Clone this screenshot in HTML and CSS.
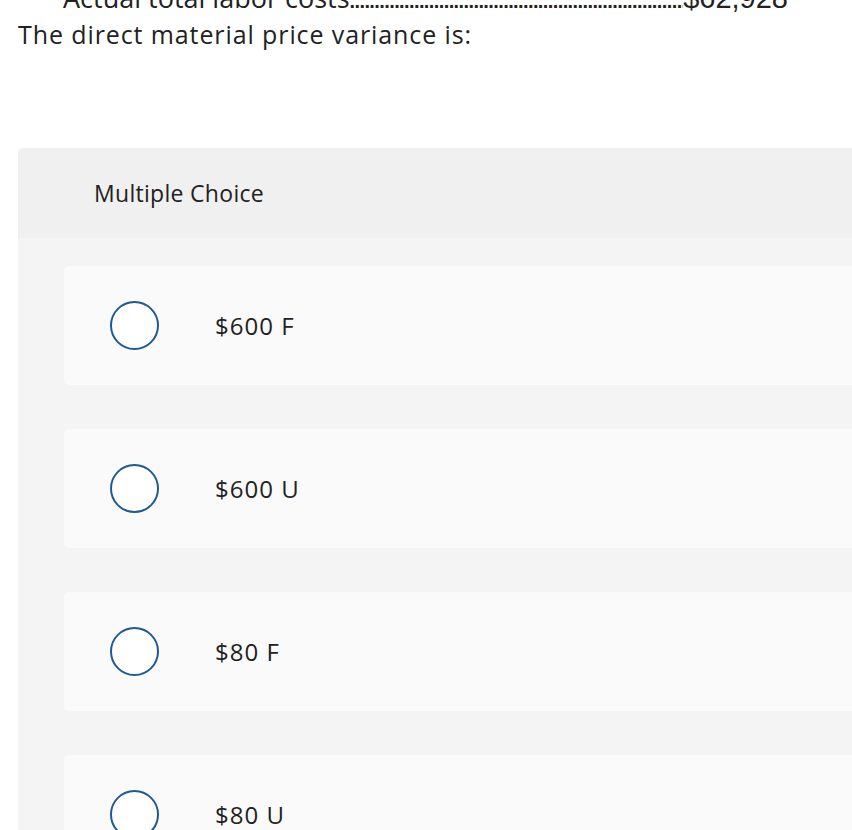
FILE: index.html
```html
<!DOCTYPE html>
<html>
<head>
<meta charset="utf-8">
<link rel="stylesheet" href="styles.css">
</head>
<body>
<div class="prev-line">
  <span class="prev-label">Actual total labor costs</span>
  <span class="leader">........................................................................................................................................</span>
  <span class="prev-value">$62,928</span>
</div>
<p class="question">The direct material price variance is:</p>
<section class="panel">
  <div class="panel-header">Multiple Choice</div>
  <div class="panel-body">
    <div class="choice"><span class="radio"></span><span class="choice-label">$600 F</span></div>
    <div class="choice"><span class="radio"></span><span class="choice-label">$600 U</span></div>
    <div class="choice"><span class="radio"></span><span class="choice-label">$80 F</span></div>
    <div class="choice"><span class="radio"></span><span class="choice-label">$80 U</span></div>
  </div>
</section>
</body>
</html>
```
FILE: styles.css
```css
html, body {
  margin: 0;
  padding: 0;
  background: #ffffff;
  overflow: hidden;
}
body {
  font-family: "Open Sans", Lato, sans-serif;
  color: #222222;
  width: 852px;
  height: 830px;
}
.prev-line {
  display: flex;
  align-items: baseline;
  margin-top: -17px;
  padding-left: 63px;
  width: 725px;
  font-size: 27px;
  line-height: 30px;
  height: 30px;
  white-space: nowrap;
}
.leader {
  flex: 1;
  overflow: hidden;
  font-family: "Liberation Sans", sans-serif;
  font-size: 20px;
  font-weight: bold;
  letter-spacing: -0.6px;
}
.prev-value {
  font-family: "Liberation Sans", sans-serif;
  font-size: 29px;
}
.question {
  margin: 0;
  padding-left: 18px;
  font-size: 25px;
  letter-spacing: 0.9px;
  line-height: 32px;
  padding-top: 5px;
}
.panel {
  margin: 98px 0 0 18px;
  background: #f0f0f0;
  border-radius: 5px 0 0 0;
}
.panel-header {
  height: 90px;
  display: flex;
  align-items: center;
  padding-left: 76px;
  font-size: 23px;
  letter-spacing: 0.3px;
}
.panel-body {
  background: #f4f4f4;
  padding: 28px 0 0 46px;
}
.choice {
  height: 119px;
  margin-bottom: 44px;
  background: #fafafa;
  border-radius: 5px 0 0 5px;
  display: flex;
  align-items: center;
  padding-left: 46px;
}
.radio {
  width: 45px;
  height: 45px;
  border: 2.5px solid #1f5a94;
  border-radius: 50%;
  background: #ffffff;
  flex: none;
}
.choice-label {
  margin-left: 56px;
  font-size: 24px;
  letter-spacing: 1px;
}
```
